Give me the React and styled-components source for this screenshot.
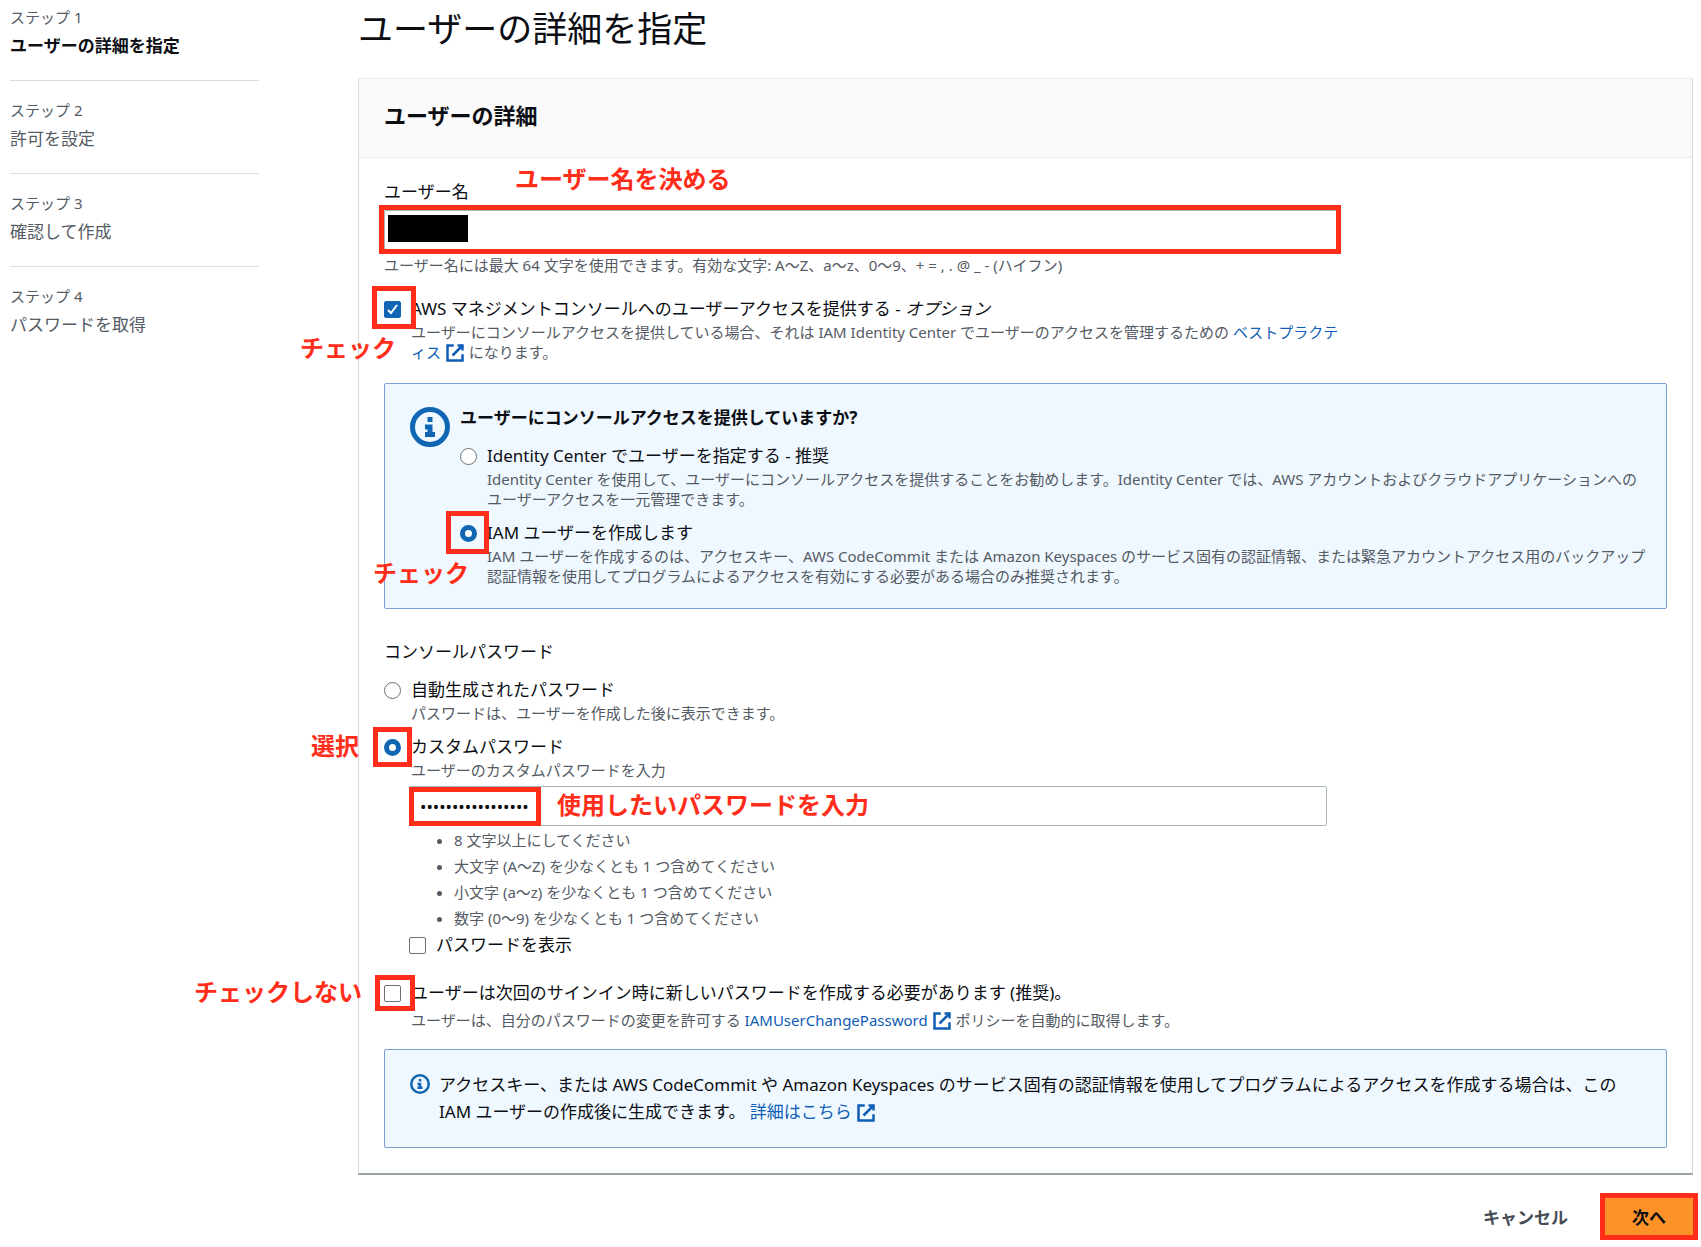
import React from 'react';
import styled, { createGlobalStyle } from 'styled-components';

const GlobalStyle = createGlobalStyle`
  * {
    box-sizing: border-box;
  }

  body {
    margin: 0;
    background-color: #fff;
    color: #0b0e13;
    font-family: 'Noto Sans', 'Noto Sans CJK JP', sans-serif;
    font-size: 17px;
    line-height: 24px;
  }
`;

const Page = styled.div`
  display: grid;
  grid-template-columns: 249px 1fr;
  column-gap: 99px;
  padding: 5px 8px 8px 10px;
`;

const StepList = styled.ol`
  list-style: none;
  margin: 0;
  padding: 0;
`;

const Step = styled.li`
  padding-bottom: 22px;
  margin-bottom: 17px;
  border-bottom: 1px solid #d9dfdf;
  color: ${props => (props.$active ? '#0b0e13' : '#545b64')};
  font-weight: ${props => (props.$active ? 700 : 400)};

  &:last-child {
    border-bottom: none;
  }
`;

const StepNumber = styled.div`
  margin-bottom: 5px;
  color: #545b64;
  font-size: 15px;
  font-weight: 400;
`;

const PageTitle = styled.h1`
  margin: 0 0 25px;
  font-size: 35px;
  font-weight: 400;
  line-height: 48px;
`;

const Card = styled.section`
  border: 1px solid #d5dbdb;
  border-top-color: #eaeded;
  border-bottom: 2px solid #98a1a5;
`;

const CardHeader = styled.header`
  padding: 20px 25px 26px;
  background-color: #fafafa;
  border-bottom: 1px solid #eaeded;
`;

const CardTitle = styled.h2`
  margin: 0;
  font-size: 22px;
  font-weight: 700;
  line-height: 32px;
`;

const CardBody = styled.div`
  padding: 22px 25px 25px;
`;

const Field = styled.div`
  position: relative;
  max-width: 953px;
`;

const FieldLabel = styled.label`
  display: block;
  margin-bottom: 6px;
`;

const InputWrap = styled.div`
  position: relative;
  display: flex;
`;

const TextInput = styled.input`
  width: 100%;
  height: 40px;
  padding: 4px 10px;
  border: 1px solid #aab7b8;
  border-radius: 2px;
  background-color: #fff;
  color: #0b0e13;
  font-family: inherit;
  font-size: 17px;
  outline: none;
`;

const Redacted = styled.span`
  position: absolute;
  top: 5px;
  left: 4px;
  width: 80px;
  height: 27px;
  background-color: #000;
`;

const Hint = styled.div`
  display: block;
  margin-top: ${props => props.$gap || 1}px;
  color: #545b64;
  font-size: 15px;
  line-height: 20px;
`;

const Choices = styled.fieldset`
  display: grid;
  row-gap: 12px;
  min-width: 0;
  margin: ${props => props.$top || 0}px 0 0;
  padding: 0;
  border: none;
`;

const GroupLabel = styled.legend`
  margin-bottom: 14px;
  padding: 0;
  font-weight: ${props => (props.$bold ? 700 : 400)};
`;

const Option = styled.div`
  display: grid;
  grid-template-columns: 17px 1fr;
  column-gap: 10px;
  margin-top: ${props => props.$top || 0}px;
`;

const ControlWrap = styled.span`
  position: relative;
  display: flex;
  width: 17px;
  height: 17px;
  margin-top: 4px;
`;

const Control = styled.input`
  appearance: none;
  width: 17px;
  height: 17px;
  margin: 0;
  border: 1px solid #687078;
  border-radius: ${props => (props.type === 'radio' ? '50%' : '2px')};
  background-color: #fff;

  &:checked {
    border: ${props => (props.type === 'radio' ? '5px' : '1px')} solid #1166b4;
    background-color: ${props => (props.type === 'radio' ? '#fff' : '#1166b4')};
  }
`;

const Tick = styled.svg`
  position: absolute;
  inset: 0;
  pointer-events: none;
`;

/* Red frame drawn over a control */
const Frame = styled.span`
  position: absolute;
  inset: ${props => props.$inset};
  width: ${props => props.$width || 'auto'};
  border: 5px solid #ff2d1a;
  pointer-events: none;
`;

const Note = styled.span`
  position: absolute;
  top: ${props => props.$top}px;
  left: ${props => props.$left}px;
  color: #ff2d1a;
  font-size: 24px;
  font-weight: 700;
  line-height: 32px;
  white-space: nowrap;
  pointer-events: none;
`;

const Link = styled.a`
  color: #0f5db5;
  text-decoration: none;
`;

const LinkIcon = styled.svg`
  width: 20px;
  height: 20px;
  vertical-align: -5px;
`;

const InfoBox = styled.div`
  display: flex;
  gap: ${props => (props.$large ? 10 : 9)}px;
  margin-top: ${props => (props.$large ? 20 : 18)}px;
  padding: ${props => (props.$large ? '22px 16px 22px 25px' : '21px 25px 22px')};
  border: 1px solid #7a9fd0;
  border-radius: 2px;
  background-color: #f0f8ff;
`;

const InfoGlyph = styled.svg`
  flex: none;
  width: ${props => props.$size}px;
  height: ${props => props.$size}px;
  margin-top: ${props => (props.$size > 20 ? 1 : 3)}px;
`;

const InfoText = styled.p`
  margin: 0;
  line-height: 27px;
`;

const PasswordBlock = styled.div`
  max-width: 943px;
  margin-top: 6px;
  padding-left: 25px;
`;

const Rules = styled.ul`
  margin: 1px 0 2px;
  padding-left: 45px;
  color: #545b64;
  font-size: 15px;
  line-height: 26px;
`;

const Footer = styled.footer`
  display: flex;
  justify-content: flex-end;
  align-items: center;
  gap: 13px;
  padding-top: 23px;
`;

const Button = styled.button`
  position: relative;
  height: 37px;
  padding: 0 ${props => (props.$primary ? 27 : 24)}px;
  border: none;
  background-color: ${props => (props.$primary ? '#fd9229' : 'transparent')};
  color: ${props => (props.$primary ? '#0b0e13' : '#454c55')};
  font-family: inherit;
  font-size: 17px;
  font-weight: 700;
`;

const ExternalIcon = () => (
  <LinkIcon viewBox="0 0 16 16" fill="none" stroke="#0f5db5" strokeWidth="2" aria-hidden="true">
    <path d="M10 2h4v4" />
    <path d="M6 10l8-8" />
    <path d="M14 9v5H2V2h5" />
  </LinkIcon>
);

const InfoIcon = ({ size }) => (
  <InfoGlyph $size={size} viewBox="0 0 16 16" fill="none" stroke="#1166b4" strokeWidth="2" aria-hidden="true">
    <circle cx="8" cy="8" r="7" />
    <path d="M8 11V8H6M10 11H6M8 6V4" />
  </InfoGlyph>
);

const Choice = props => (
  <Option $top={props.top}>
    <ControlWrap>
      <Control
        id={props.id}
        type={props.type}
        name={props.name}
        defaultChecked={props.checked}
      />
      {props.type === 'checkbox' && props.checked && (
        <Tick viewBox="0 0 17 17" fill="none" stroke="#fff" strokeWidth="2">
          <path d="M4 9l3 3 6-8" />
        </Tick>
      )}
      {props.frame && <Frame $inset={props.frame} />}
      {props.note}
    </ControlWrap>
    <div>
      <label htmlFor={props.id}>{props.label}</label>
      {props.children}
    </div>
  </Option>
);

const steps = [
  'ユーザーの詳細を指定',
  '許可を設定',
  '確認して作成',
  'パスワードを取得',
];

const rules = [
  '8 文字以上にしてください',
  '大文字 (A〜Z) を少なくとも 1 つ含めてください',
  '小文字 (a〜z) を少なくとも 1 つ含めてください',
  '数字 (0〜9) を少なくとも 1 つ含めてください',
];

const App = () => {
  return (
    <>
      <GlobalStyle />
      <Page>
        <nav>
          <StepList>
            {steps.map((step, i) => (
              <Step key={step} $active={i === 0}>
                <StepNumber>ステップ {i + 1}</StepNumber>
                {step}
              </Step>
            ))}
          </StepList>
        </nav>
        <main>
          <PageTitle>ユーザーの詳細を指定</PageTitle>
          <Card>
            <CardHeader>
              <CardTitle>ユーザーの詳細</CardTitle>
            </CardHeader>
            <CardBody>
              <Field>
                <FieldLabel htmlFor="userName">ユーザー名</FieldLabel>
                <Note $top={-17} $left={131}>
                  ユーザー名を決める
                </Note>
                <InputWrap>
                  <TextInput id="userName" type="text" />
                  <Redacted />
                  <Frame $inset="-5px -4px -4px -5px" />
                </InputWrap>
                <Hint $gap={5}>
                  ユーザー名には最大 64 文字を使用できます。有効な文字: A〜Z、a〜z、0〜9、+ = , . @ _ - (ハイフン)
                </Hint>
              </Field>

              <Choice
                id="consoleAccess"
                type="checkbox"
                checked
                top={22}
                frame="-15px -15px -11px -12px"
                note={<Note $top={31} $left={-84}>チェック</Note>}
                label={
                  <>
                    AWS マネジメントコンソールへのユーザーアクセスを提供する - <i>オプション</i>
                  </>
                }>
                <Hint>
                  ユーザーにコンソールアクセスを提供している場合、それは IAM Identity Center でユーザーのアクセスを管理するための{' '}
                  <Link href="#best-practice">
                    ベストプラクテ
                    <br />
                    ィス <ExternalIcon />
                  </Link>{' '}
                  になります。
                </Hint>
              </Choice>

              <InfoBox $large>
                <InfoIcon size={40} />
                <Choices>
                  <GroupLabel $bold>
                    ユーザーにコンソールアクセスを提供していますか?
                  </GroupLabel>
                  <Choice
                    id="identityCenter"
                    type="radio"
                    name="userType"
                    label="Identity Center でユーザーを指定する - 推奨">
                    <Hint>
                      Identity Center を使用して、ユーザーにコンソールアクセスを提供することをお勧めします。Identity Center では、AWS アカウントおよびクラウドアプリケーションへの
                      <br />
                      ユーザーアクセスを一元管理できます。
                    </Hint>
                  </Choice>
                  <Choice
                    id="iamUser"
                    type="radio"
                    name="userType"
                    checked
                    frame="-14px -12px -12px -14px"
                    note={<Note $top={32} $left={-87}>チェック</Note>}
                    label="IAM ユーザーを作成します">
                    <Hint>
                      IAM ユーザーを作成するのは、アクセスキー、AWS CodeCommit または Amazon Keyspaces のサービス固有の認証情報、または緊急アカウントアクセス用のバックアップ
                      <br />
                      認証情報を使用してプログラムによるアクセスを有効にする必要がある場合のみ推奨されます。
                    </Hint>
                  </Choice>
                </Choices>
              </InfoBox>

              <Choices $top={31}>
                <GroupLabel>コンソールパスワード</GroupLabel>
                <Choice
                  id="autoPassword"
                  type="radio"
                  name="passwordType"
                  label="自動生成されたパスワード">
                  <Hint>パスワードは、ユーザーを作成した後に表示できます。</Hint>
                </Choice>
                <Choice
                  id="customPassword"
                  type="radio"
                  name="passwordType"
                  checked
                  frame="-12px -11px -11px"
                  note={<Note $top={-9} $left={-73}>選択</Note>}
                  label="カスタムパスワード">
                  <Hint as="label" htmlFor="password">
                    ユーザーのカスタムパスワードを入力
                  </Hint>
                </Choice>
              </Choices>

              <PasswordBlock>
                <InputWrap>
                  <TextInput id="password" type="password" defaultValue="examplePassword12" />
                  <Frame $inset="1px auto 0 0" $width="132px" />
                  <Note $top={3} $left={148}>
                    使用したいパスワードを入力
                  </Note>
                </InputWrap>
                <Rules>
                  {rules.map(rule => (
                    <li key={rule}>{rule}</li>
                  ))}
                </Rules>
                <Choice id="showPassword" type="checkbox" label="パスワードを表示" />
              </PasswordBlock>

              <Choice
                id="resetPassword"
                type="checkbox"
                top={24}
                frame="-10px -14px -9px -9px"
                note={<Note $top={-9} $left={-190}>チェックしない</Note>}
                label="ユーザーは次回のサインイン時に新しいパスワードを作成する必要があります (推奨)。">
                <Hint $gap={5}>
                  ユーザーは、自分のパスワードの変更を許可する{' '}
                  <Link href="#policy">
                    IAMUserChangePassword <ExternalIcon />
                  </Link>{' '}
                  ポリシーを自動的に取得します。
                </Hint>
              </Choice>

              <InfoBox>
                <InfoIcon size={20} />
                <InfoText>
                  アクセスキー、または AWS CodeCommit や Amazon Keyspaces のサービス固有の認証情報を使用してプログラムによるアクセスを作成する場合は、この IAM ユーザーの作成後に生成できます。{' '}
                  <Link href="#more">
                    詳細はこちら <ExternalIcon />
                  </Link>
                </InfoText>
              </InfoBox>
            </CardBody>
          </Card>
          <Footer>
            <Button type="button">キャンセル</Button>
            <Button type="submit" $primary>
              次へ
              <Frame $inset="-5px" />
            </Button>
          </Footer>
        </main>
      </Page>
    </>
  );
};

export default App;
